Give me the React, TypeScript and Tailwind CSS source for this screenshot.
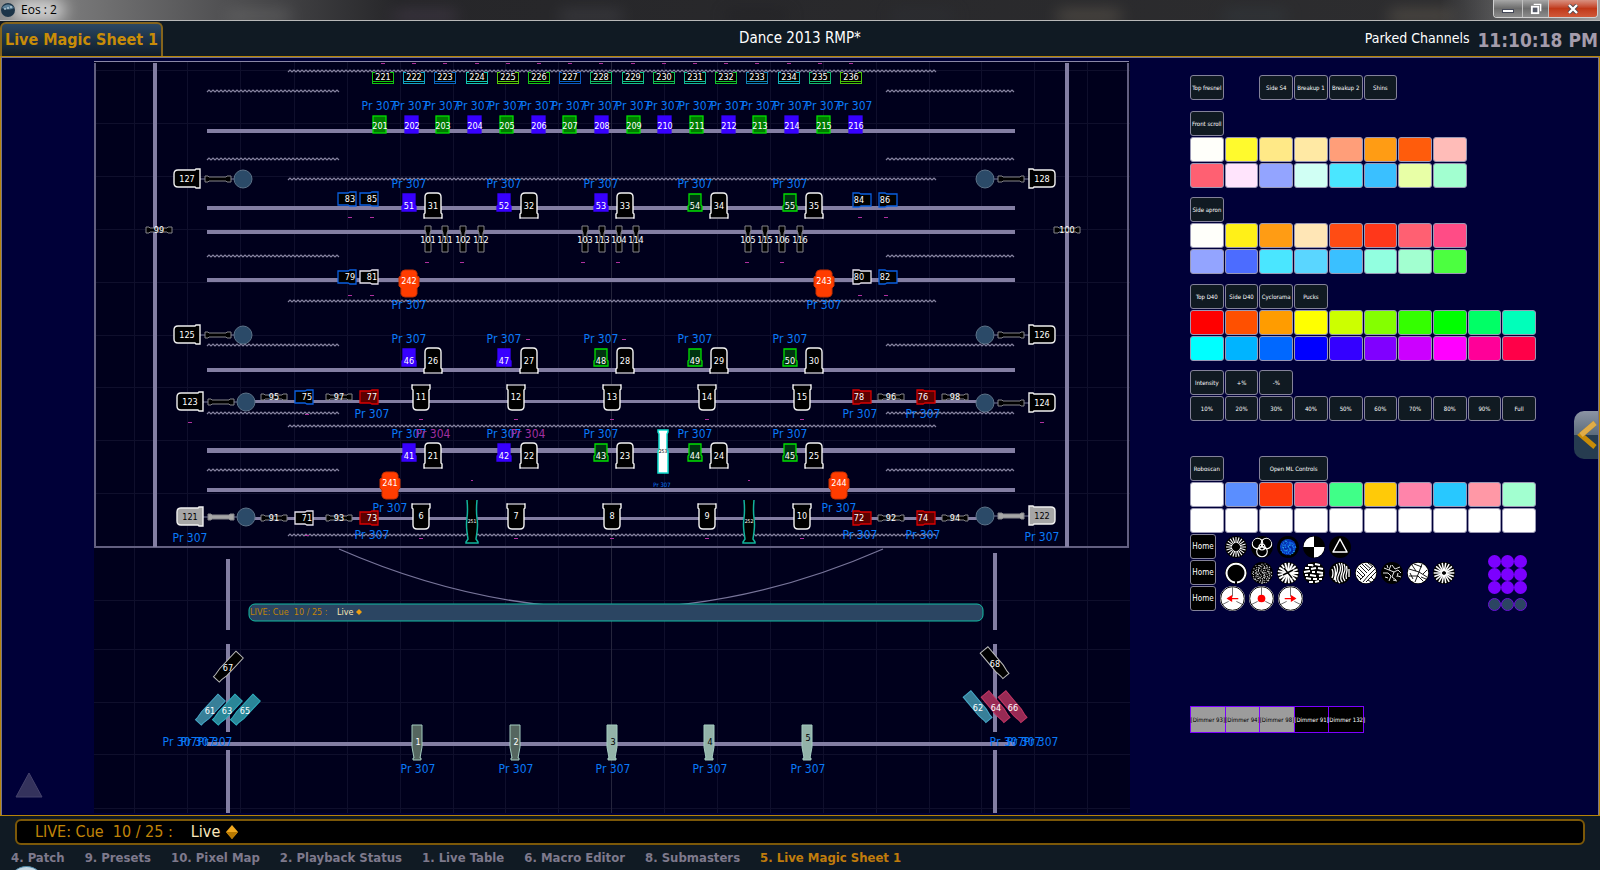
import type { ReactNode } from 'react'

const SANS = "font-['DejaVu_Sans_Condensed','DejaVu_Sans',sans-serif]"
const BLUE = '#0a7af8'
const PIPE = '#837ea3'

/* ---------- plot data ---------- */

const GRID_X = [134, 187, 240, 294, 347, 400, 453, 505, 558, 664, 717, 770, 823, 876, 929, 981, 1034, 1087]
const GRID_Y = [70, 123, 176, 229, 282, 335, 387, 440, 493, 600, 649, 702, 754, 808]

const CYC_COLORS = [
  '#12c412', '#12a4c4', '#0a68c4', '#12c4b4', '#54c80a', '#16c416', '#0a5cc4', '#12b86a',
  '#12c08c', '#12c056', '#12b89a', '#12c030', '#1080b4', '#12b0b8', '#12b870', '#48c00a',
]

const PURPLE = { fill: '#3800ff', stroke: '#3800ff' }
const GREEN = { fill: '#007a00', stroke: '#00e000' }
const DARK_GREEN = { fill: '#003410', stroke: '#00e000' }
const RED = { fill: '#5c0000', stroke: '#d80000' }
const BLUE_BOX = { fill: '#000', stroke: '#0a5fe0' }
const WHITE_BOX = { fill: '#000', stroke: '#e4e0ec' }

const COLS = [409, 504, 601, 695, 790]
const PAR_COLS = [433, 529, 625, 719, 814]
const DOWN_COLS = [421, 516, 612, 707, 802]

const ROWS = [
  { y: 193, specials: [51, 52, 53, 54, 55], pars: [31, 32, 33, 34, 35], purple: 3 },
  { y: 348, specials: [46, 47, 48, 49, 50], pars: [26, 27, 28, 29, 30], purple: 2 },
  { y: 443, specials: [41, 42, 43, 44, 45], pars: [21, 22, 23, 24, 25], purple: 2 },
]

const SHINS = [
  [428, 101], [445, 111], [463, 102], [481, 112],
  [585, 103], [602, 113], [619, 104], [636, 114],
  [748, 105], [765, 115], [782, 106], [800, 116],
]

/* ---------- plot pieces ---------- */

type TextProps = { x: number; y: number; children: ReactNode; size?: number; fill?: string }

const Label = ({ x, y, children, size = 9, fill = '#fff' }: TextProps) => (
  <text x={x} y={y} dy="0.3em" textAnchor="middle" fontSize={size} fill={fill}>{children}</text>
)

const Preset = ({ x, y, fill = BLUE, n = 307 }: { x: number; y: number; fill?: string; n?: number }) => (
  <Label x={x} y={y} size={12} fill={fill}>Pr {n}</Label>
)

const Dash = ({ x, y }: { x: number; y: number }) => (
  <rect x={x - 2} y={y} width={4} height={1} fill="#b030a0" />
)

const Curtain = ({ x1, x2, y }: { x1: number; x2: number; y: number }) => {
  let d = `M${x1} ${y + 1}`
  for (let x = x1; x + 4 <= x2; x += 4) d += 'l2 -2l2 2'
  return <path d={d} fill="none" stroke="#85829f" strokeWidth={1.2} />
}

const Pipe = ({ x1 = 207, x2 = 1015, y, w = 4 }: { x1?: number; x2?: number; y: number; w?: number }) => (
  <rect x={x1} y={y - 2} width={x2 - x1} height={w} fill={PIPE} />
)

const Special = ({ x, y, n, c }: { x: number; y: number; n: number; c: { fill: string; stroke: string } }) => (
  <g>
    <path d={`M${x - 6} ${y + 1}h12v11l1 1v5h-14v-5l1 -1z`} fill={c.fill} stroke={c.stroke} strokeWidth={1.3} />
    <Label x={x} y={y + 13}>{n}</Label>
  </g>
)

const ParUp = ({ x, y, n }: { x: number; y: number; n: number }) => (
  <g>
    <path d={`M${x - 8} ${y + 4}q0 -4 4 -4h8q4 0 4 4v16l1 1v4h-18v-4l1 -1z`} fill="#000" stroke="#f4f4f4" strokeWidth={1.4} />
    <path d={`M${x - 8} ${y + 25}h16`} stroke="#77757f" strokeWidth={1.5} />
    <Label x={x} y={y + 13}>{n}</Label>
  </g>
)

const ParDown = ({ x, y, n }: { x: number; y: number; n: number }) => (
  <g>
    <path d={`M${x - 9} ${y}h18v4l-1 1v16q0 4 -4 4h-8q-4 0 -4 -4v-16l-1 -1z`} fill="#000" stroke="#f4f4f4" strokeWidth={1.4} />
    <path d={`M${x - 8} ${y}h16`} stroke="#77757f" strokeWidth={1.5} />
    <Label x={x} y={y + 12}>{n}</Label>
  </g>
)

// Small side box, flared towards the stage side it points to
const Box = ({ x, y, n, c, flip = false }: { x: number; y: number; n: number; c: { fill: string; stroke: string }; flip?: boolean }) => (
  <g>
    <path
      d={flip ? `M${x} ${y}h6l2 1h10v12h-10l-2 1h-6z` : `M${x} ${y + 1}h10l2 -1h6v14h-6l-2 -1h-10z`}
      fill={c.fill}
      stroke={c.stroke}
      strokeWidth={1.3}
    />
    <Label x={flip ? x + 6 : x + 12} y={y + 7}>{n}</Label>
  </g>
)

const Barrel = ({ x, y, fill = '#000', n, flip }: { x: number; y: number; fill?: string; n?: number; flip?: boolean }) => (
  <g>
    <g transform={flip ? `translate(${x + 26} ${y}) scale(-1 1)` : `translate(${x} ${y})`}>
      <path d="M0 -3h3l1 1h17l1 -1h4v6h-4l-1 -1h-17l-1 1h-3z" fill={fill} stroke="#85858a" />
    </g>
    {n && <Label x={x + 13} y={y}>{n}</Label>}
  </g>
)

const SideUnit = ({ x, y, n, flip = false, grey = false }: { x: number; y: number; n: number; flip?: boolean; grey?: boolean }) => {
  const fill = grey ? '#a6a6a6' : '#000'
  const s = flip ? -1 : 1
  const ball = flip ? x - 70 : x + 69
  return (
    <g>
      <path d={`M${x} ${y}H${ball}`} stroke="#77799a" />
      <g transform={`translate(${x} ${y}) scale(${s} 1)`}>
        <path d="M0 -5q0 -4 4 -4h17l1 -1h4v19h-4l-1 -1h-17q-4 0 -4 -4z" fill={fill} stroke="#f0f0f0" strokeWidth={1.4} />
      </g>
      <Barrel x={flip ? x - 57 : x + 31} y={y} fill={fill} flip={flip} />
      <circle cx={ball} cy={y} r={9} fill="#2b4a68" stroke="#5c7288" />
      <Label x={x + 13 * s} y={y} fill={grey ? '#000' : '#fff'}>{n}</Label>
    </g>
  )
}

const Mover = ({ x, y, n }: { x: number; y: number; n: number }) => (
  <g>
    <path
      d={`M${x - 8} ${y + 3}q1 -3 4 -3h8q3 0 4 3v3l2 1v9l-2 2v6q-1 3 -4 3h-8q-3 0 -4 -3v-6l-2 -2v-9l2 -1z`}
      fill="#ff3c00"
      stroke="#c83000"
    />
    <Label x={x} y={y + 11}>{n}</Label>
  </g>
)

const Shin = ({ x, n }: { x: number; n: number }) => (
  <g>
    <path
      d={`M${x - 3} 226h6v4l-1 3v6l1 3v10h-6v-10l1 -3v-6l-1 -3z`}
      fill="#000"
      stroke="#85858a"
    />
    <Label x={x} y={240}>{n}</Label>
  </g>
)

const Spot = ({ x, y, n, fill, stroke, angle }: { x: number; y: number; n: number; fill: string; stroke: string; angle: number }) => (
  <g>
    <path
      transform={`translate(${x} ${y}) rotate(${angle})`}
      d="M-5 -17h10v24l-1 7v3h-8v-3l-1 -7z"
      fill={fill}
      stroke={stroke}
    />
    <Label x={x} y={y + 1}>{n}</Label>
  </g>
)

const Front = ({ x, n, lit, labelY = 742 }: { x: number; n: number; lit: boolean; labelY?: number }) => (
  <g>
    <path d={`M${x - 5} 725h10v22l-2 11h1v2h-8v-2h1l-2 -11z`} fill={lit ? '#93b3a9' : '#55665f'} stroke="#a4ccc0" />
    <Label x={x + 1} y={labelY} fill={lit ? '#000' : '#fff'}>{n}</Label>
    <Preset x={x + 1} y={769} />
  </g>
)

const Scroller = ({ x, y, n, white = false }: { x: number; y: number; n: number; white?: boolean }) => (
  <g>
    <path
      d={white
        ? `M${x - 5} ${y}h10v2l-1 2v15l1 2v22h-10v-22l1 -2v-15l-1 -2z`
        : `M${x - 5} ${y}q1 10 0 18q-1 6 0 14l1 7l-2 3v1h12v-1l-2 -3l1 -7q1 -8 0 -14q-1 -8 0 -18`}
      fill={white ? '#fff' : '#000'}
      stroke={white ? '#10e0d0' : '#12b49c'}
      strokeWidth={1.5}
    />
    <Label x={x} y={y + 21} size={5} fill={white ? '#000' : '#fff'}>{n}</Label>
  </g>
)

const Plot = () => (
  <svg viewBox="94 58 1036 755" preserveAspectRatio="xMinYMin meet" className={`block w-full ${SANS}`} aria-label="Lighting plot">
    <rect x={94} y={58} width={1036} height={755} fill="#00001c" />
    <g shapeRendering="crispEdges">
      {GRID_X.map((x) => <rect key={x} x={x} y={62} width={1} height={751} fill="#0f0f2c" />)}
      {GRID_Y.map((y) => <rect key={y} x={94} y={y} width={1036} height={1} fill="#0f0f2c" />)}
      <rect x={611} y={62} width={1} height={751} fill="#25253c" />
      <rect x={94} y={58} width={1036} height={3} fill="#000038" />
      <path d="M94 61.5H1129" stroke="#8a87a6" />
      <path d="M95 63V547H1128V63" fill="none" stroke="#625f80" strokeWidth={2} />

      {[131, 208, 232, 280, 370, 490, 744].map((y) => <Pipe key={y} y={y} />)}
      <Pipe y={450} w={5} />
      <Pipe y={402} x1={250} x2={980} w={3} />
      <Pipe y={519} x1={250} x2={980} w={3} />

      <rect x={153} y={63} width={4} height={484} fill={PIPE} />
      <rect x={1065} y={63} width={4} height={484} fill={PIPE} />
      {[226, 993].map((x) => (
        <g key={x} fill={PIPE}>
          <rect x={x} y={x === 226 ? 559 : 553} width={4} height={x === 226 ? 71 : 77} />
          <rect x={x} y={644} width={4} height={88} />
          <rect x={x} y={750} width={4} height={63} />
        </g>
      ))}
    </g>

    {[91, 159, 256, 345, 413, 470].map((y) => (
      <g key={y}>
        <Curtain x1={207} x2={339} y={y} />
        <Curtain x1={886} x2={1015} y={y} />
      </g>
    ))}
    {[71, 179, 301, 426, 535].map((y) => <Curtain key={y} x1={288} x2={936} y={y} />)}
    <path d="M339 549Q611 668 883 549" fill="none" stroke="#77749a" strokeWidth={1.3} />

    {/* Cyc units */}
    {CYC_COLORS.map((c, i) => {
      const x = Math.round(383 + 31.2 * i)
      return (
        <g key={c}>
          <Dash x={x} y={63} />
          <rect x={x - 10} y={73} width={20} height={10} fill="#000" />
          <path shapeRendering="crispEdges" d={`M${x - 8} 72h-3v11h21v-11h-3M${x - 10} 81h20`} fill="none" stroke={c} />
          <Label x={x} y={77}>{221 + i}</Label>
        </g>
      )
    })}

    {/* Backlight row */}
    {CYC_COLORS.map((c, i) => {
      const x = Math.round(380 + 31.7 * i)
      return (
        <g key={c}>
          <rect x={x - 7} y={116} width={13} height={17} strokeWidth={1.3} {...(i % 2 ? PURPLE : GREEN)} />
          <Label x={x} y={126}>{201 + i}</Label>
          <Preset x={x - 1} y={106} />
        </g>
      )
    })}

    {ROWS.map((row) => (
      <g key={row.y}>
        {COLS.map((x, i) => (
          <g key={x}>
            <Preset x={x} y={row.y - 9} />
            <Special x={x} y={row.y} n={row.specials[i]} c={i < row.purple ? PURPLE : DARK_GREEN} />
            <ParUp x={PAR_COLS[i]} y={row.y} n={row.pars[i]} />
          </g>
        ))}
      </g>
    ))}
    <Preset x={433} y={434} fill="#a030a0" n={304} />
    <Preset x={528} y={434} fill="#a030a0" n={304} />
    <Dash x={528} y={339} />
    <Dash x={624} y={339} />

    {DOWN_COLS.map((x, i) => (
      <g key={x}>
        <ParDown x={x} y={385} n={11 + i} />
        <ParDown x={x} y={504} n={6 + i} />
        <Dash x={x} y={419} />
        <Dash x={x} y={538} />
      </g>
    ))}

    {SHINS.map(([x, n]) => <Shin key={n} x={x} n={n} />)}
    {[427, 462, 583, 618, 747, 782].map((x) => <Dash key={x} x={x} y={262} />)}

    <Box x={338} y={192} n={83} c={BLUE_BOX} />
    <Box x={360} y={192} n={85} c={BLUE_BOX} />
    <Box x={338} y={270} n={79} c={BLUE_BOX} />
    <Box x={360} y={270} n={81} c={WHITE_BOX} />
    <Box x={853} y={193} n={84} c={BLUE_BOX} flip />
    <Box x={879} y={193} n={86} c={BLUE_BOX} flip />
    <Box x={853} y={270} n={80} c={WHITE_BOX} flip />
    <Box x={879} y={270} n={82} c={BLUE_BOX} flip />
    {[350, 372, 860, 886].map((x) => (
      <g key={x}>
        <Dash x={x} y={217} />
        <Dash x={x} y={295} />
      </g>
    ))}

    <Mover x={409} y={270} n={242} />
    <Preset x={409} y={305} />
    <Mover x={824} y={270} n={243} />
    <Preset x={824} y={305} />
    <Mover x={390} y={472} n={241} />
    <Preset x={390} y={508} />
    <Mover x={839} y={472} n={244} />
    <Preset x={839} y={508} />

    <SideUnit x={174} y={179} n={127} />
    <SideUnit x={174} y={335} n={125} />
    <SideUnit x={177} y={402} n={123} />
    <SideUnit x={177} y={517} n={121} grey />
    <Dash x={190} y={422} />
    <Preset x={190} y={538} />
    <SideUnit x={1055} y={179} n={128} flip />
    <SideUnit x={1055} y={335} n={126} flip />
    <SideUnit x={1055} y={403} n={124} flip />
    <SideUnit x={1055} y={516} n={122} flip grey />
    <Dash x={1042} y={422} />
    <Preset x={1042} y={537} />

    <Barrel x={146} y={230} n={99} />
    <Barrel x={1054} y={230} n={100} flip />

    {[{ y: 397, a: [95, 75, 97, 77, 78, 96, 76, 98] }, { y: 518, a: [91, 71, 93, 73, 72, 92, 74, 94] }].map(({ y, a }) => (
      <g key={y}>
        <Barrel x={261} y={y} n={a[0]} />
        <Box x={295} y={y - 7} n={a[1]} c={a[1] === 75 ? BLUE_BOX : WHITE_BOX} />
        <Barrel x={326} y={y} n={a[2]} />
        <Box x={360} y={y - 7} n={a[3]} c={RED} />
        <Box x={853} y={y - 7} n={a[4]} c={RED} flip />
        <Barrel x={878} y={y} n={a[5]} flip />
        <Box x={917} y={y - 7} n={a[6]} c={RED} flip />
        <Barrel x={942} y={y} n={a[7]} flip />
        <Preset x={372} y={y + 17} />
        <Preset x={860} y={y + 17} />
        <Preset x={923} y={y + 17} />
        <Dash x={307} y={y + 17} />
      </g>
    ))}

    <Scroller x={472} y={500} n={251} />
    <Scroller x={749} y={500} n={252} />
    <Scroller x={663} y={430} n={253} white />
    <Label x={662} y={485} size={6} fill={BLUE}>Pr 307</Label>
    <rect x={471} y={480} width={2} height={1} fill="#b030a0" />
    <rect x={748} y={480} width={2} height={1} fill="#b030a0" />

    {/* Cue status bar */}
    <rect x={249} y={604} width={734} height={17} rx={6} fill="#2b4562" stroke="#12bca4" />
    <text x={250} y={615} fontSize={9} fill="#c08408" xmlSpace="preserve">LIVE: Cue  10 / 25 :</text>
    <text x={337} y={615} fontSize={9} fill="#f8e6b4">Live</text>
    <path d="M359 609l3 3l-3 3l-3 -3z" fill="#f0a010" />

    {/* Box booms */}
    <Spot x={228} y={667} n={67} fill="#000" stroke="#b8b8b8" angle={43} />
    <Spot x={210} y={710} n={61} fill="#387f98" stroke="#46a8c8" angle={43} />
    <Spot x={227} y={710} n={63} fill="#2a8698" stroke="#30b0c0" angle={43} />
    <Spot x={245} y={710} n={65} fill="#2a8698" stroke="#30b0c0" angle={43} />
    <Spot x={995} y={663} n={68} fill="#000" stroke="#b8b8b8" angle={-40} />
    <Spot x={978} y={707} n={62} fill="#387f98" stroke="#46a8c8" angle={-40} />
    <Spot x={996} y={707} n={64} fill="#982a54" stroke="#c03664" angle={-40} />
    <Spot x={1013} y={707} n={66} fill="#982a54" stroke="#c03664" angle={-40} />
    {[180, 198, 215, 1007, 1024, 1041].map((x) => <Preset key={x} x={x} y={742} />)}

    <Front x={417} n={1} lit={false} />
    <Front x={515} n={2} lit={false} />
    <Front x={612} n={3} lit />
    <Front x={709} n={4} lit />
    <Front x={807} n={5} lit labelY={738} />
  </svg>
)

/* ---------- control panel ---------- */

const FRONT_SCROLL = [
  '#fffffa', '#fffa2d', '#ffe987', '#ffe9a4', '#ff9e79', '#ff9c14', '#ff5c0c', '#ffbcb8',
  '#ff6072', '#ffe4fc', '#93a4ff', '#d0fff4', '#4ae6ff', '#3ac0ff', '#e8ffa6', '#a2ffd0',
]
const SIDE_APRON = [
  '#fffffa', '#fff018', '#ff9c14', '#ffe6b6', '#ff4c14', '#ff371a', '#ff6072', '#ff4c86',
  '#93a4ff', '#4c6cff', '#4ae6ff', '#5ad6ff', '#3ac0ff', '#92ffe0', '#a2ffd0', '#4cff40',
]
const LED = [
  '#ff0000', '#ff5000', '#ff9c00', '#ffff00', '#ccff00', '#84ff00', '#34ff00', '#00ff00', '#00ff66', '#00ffba',
  '#00ffff', '#00b4ff', '#0068ff', '#0000ff', '#3400ff', '#8000ff', '#cc00ff', '#ff00ff', '#ff0098', '#ff0048',
]
const ROBO = ['#ffffff', '#5a8eff', '#ff380a', '#ff4c70', '#40ff88', '#ffca08', '#ff84aa', '#28c8ff', '#ff98a6', '#a2ffd0']
const LEVELS = ['10%', '20%', '30%', '40%', '50%', '60%', '70%', '80%', '90%', 'Full']

const Tile = ({ label, wide = false }: { label: string; wide?: boolean }) => (
  <button className={`h-[25px] overflow-hidden rounded-[3px] border border-[#84829a] bg-[#101a22] text-[6px] leading-none whitespace-nowrap text-white ${wide ? 'col-span-2' : ''}`}>
    {label}
  </button>
)

const Swatch = ({ color, first = false }: { color: string; first?: boolean }) => (
  <button
    aria-label={color}
    className={`h-[25px] rounded-[3px] border border-[#9a98b4] ${first ? 'col-start-1' : ''}`}
    style={{ backgroundColor: color }}
  />
)

const TileGrid = ({ children, className = '' }: { children: ReactNode; className?: string }) => (
  <div className={`grid grid-cols-10 gap-px ${className}`}>{children}</div>
)

const SwatchRows = ({ colors, perRow }: { colors: string[]; perRow: number }) => (
  <>
    {colors.map((c, i) => <Swatch key={i} color={c} first={i % perRow === 0} />)}
  </>
)

const Rays = ({ count, inner, outer, width }: { count: number; inner: number; outer: number; width: number }) => (
  <>
    {Array.from({ length: count }, (_, i) => {
      const a = (i * 2 * Math.PI) / count
      return (
        <line
          key={i}
          x1={Math.cos(a) * inner} y1={Math.sin(a) * inner}
          x2={Math.cos(a) * outer} y2={Math.sin(a) * outer}
          stroke="#fff" strokeWidth={width}
        />
      )
    })}
  </>
)

// Scattered specks inside the disc, on a golden-angle spiral
const Specks = ({ count, size, radius = 10, colors }: { count: number; size: number; radius?: number; colors: string[] }) => (
  <>
    {Array.from({ length: count }, (_, i) => {
      const r = Math.sqrt((i + 0.5) / count) * radius
      const a = i * 2.4
      return (
        <rect
          key={i}
          x={Math.cos(a) * r} y={Math.sin(a) * r}
          width={size * (1 + (i % 3) * 0.5)} height={size}
          fill={colors[i % colors.length]}
          transform={`rotate(${(i * 67) % 90} ${Math.cos(a) * r} ${Math.sin(a) * r})`}
        />
      )
    })}
  </>
)

const GOBOS_1: ReactNode[] = [
  <Rays count={20} inner={4} outer={10} width={1.1} />,
  <g fill="none" stroke="#fff" strokeWidth={1.1}>
    <circle cx={-4.5} cy={-3.5} r={5.3} />
    <circle cx={4.5} cy={-3.5} r={5.3} />
    <circle cx={0} cy={4.5} r={5.3} />
    <circle r={3} />
  </g>,
  <>
    <circle r={8} fill="#0636b4" />
    <Specks count={70} size={1} radius={7.5} colors={['#1a8cff', '#0420a0', '#28a8e8', '#0a50e0']} />
  </>,
  <path d="M0 0V-10.5A10.5 10.5 0 0 0 -10.5 0zM0 0V10.5A10.5 10.5 0 0 0 10.5 0z" fill="#fff" />,
  <path d="M0 -8L7 5H-7z" fill="none" stroke="#fff" strokeWidth={1.5} strokeLinejoin="round" />,
]

const GOBOS_2: ReactNode[] = [
  <path d="M1 9.4A9.4 9.4 0 1 0 -1 9.4" fill="none" stroke="#fff" strokeWidth={2} />,
  <Specks count={80} size={0.9} colors={['#e8e8e8']} />,
  <>
    <Rays count={17} inner={1} outer={10.3} width={1.9} />
    <path d="M-4 -5L4 5M-5 2L5 -3" stroke="#000" strokeWidth={1.4} />
  </>,
  <path
    d="M-6 -8h4l1 1M1 -9l5 1M-9 -5h4M-3 -4l5 -1M4 -5l5 1M-10 -1l6 -1M-2 -1h3M3 -1l6 1M-9 2h3M-4 2l6 1M5 3l4 -1M-8 5l5 1M-1 6h4M5 6h3M-5 9l4 0M1 9l4 -1"
    stroke="#fff" strokeWidth={2.1}
  />,
  <path
    d="M-8 -4q2 4 0 9M-6 -7q3 6 0 14M-3.500 -9q2 5 0 10t0 8M-1 -10q3 5 0 11t1 9M1.500 -10q2 6 0 11t1 8M4 -9q2 5 0 9t1 8M6.500 -7q1 4 0 7t0 6M9 -4v8"
    fill="none" stroke="#fff" strokeWidth={1.3}
  />,
  <>
    <circle r={10.3} fill="#fff" />
    <path
      d="M-8 -5L-1 2M-6 -7L1 0M-4 -9L3 -2M-9 -2L-3 4M9 -4L2 3M10 -1L0 9M7 -7L3 -3M-1 2L-6 7M2 3L-3 9M-1 -9L5 -4M2 -10L7 -6M5 4L8 7M2 7L5 9M-9 2L-5 6"
      stroke="#000" strokeWidth={0.9}
    />
  </>,
  <path
    d="M-8 -5l5 2l2 -5M0 -8l3 4l5 -2M-9 0h5l3 3l-2 5M-3 -3l5 2l4 -2l3 3M2 -1l-2 5l4 3M6 3l3 1M-7 4l3 1M5 8l-4 -1M-5 -8l1 3M6 0l-1 4"
    fill="none" stroke="#fff" strokeWidth={0.9}
  />,
  <>
    <circle r={10.3} fill="#fff" />
    <path
      d="M-9 -4L1 -1L4 -9M1 -1L-3 9M1 -1L9 4M-6 -8L-2 -2M-9 3L0 3L5 8M5 1L9 -3M-5 6L-8 0M4 -6L-4 -9M3 4L8 6"
      fill="none" stroke="#000" strokeWidth={0.9}
    />
  </>,
  <Rays count={18} inner={2} outer={10.3} width={1.5} />,
]

const Gobo = ({ children, name }: { children: ReactNode; name: string }) => (
  <button aria-label={name} className="size-[22px] overflow-hidden rounded-full bg-black">
    <svg viewBox="-11 -11 22 22" className="size-full">{children}</svg>
  </button>
)

const Rotator = ({ kind }: { kind: 'left' | 'stop' | 'right' }) => (
  <button aria-label={`Rotate ${kind}`} className="size-[25px] rounded-full bg-white">
    <svg viewBox="-13 -13 26 26" className="size-full">
      <circle r={12.3} fill="#fff" stroke="#000" />
      <path d="M0 -12V-2M-10 6L-4 3M10 6L4 3" stroke="#444" strokeWidth={0.8} />
      {kind === 'stop' && <circle r={4} fill="#f00" />}
      {kind === 'left' && <path d="M6 0H-2M-1 -2.500L-5 0L-1 2.500z" stroke="#f00" strokeWidth={1.3} fill="#f00" />}
      {kind === 'right' && <path d="M-6 0H2M1 -2.500L5 0L1 2.500z" stroke="#f00" strokeWidth={1.3} fill="#f00" />}
    </svg>
  </button>
)

const HomeButton = () => (
  <button className="h-[25px] w-[26px] rounded-[3px] border border-[#84829a] bg-black text-[8px] leading-none text-white">Home</button>
)

const GoboRow = ({ gobos, bank }: { gobos: ReactNode[]; bank: string }) => (
  <div className="flex items-center gap-[9px]">
    <HomeButton />
    <div className="flex gap-1">
      {gobos.map((g, i) => <Gobo key={i} name={`Gobo ${bank}${i + 1}`}>{g}</Gobo>)}
    </div>
  </div>
)

const ControlPanel = () => (
  <aside className="pt-[17px] pl-[60px]">
    <div className="w-[346px]">
      <TileGrid>
        <Tile label="Top fresnel" />
        <span />
        {['Side S4', 'Breakup 1', 'Breakup 2', 'Shins'].map((l) => <Tile key={l} label={l} />)}
      </TileGrid>

      <TileGrid className="mt-[11px]">
        <Tile label="Front scroll" />
        <SwatchRows colors={FRONT_SCROLL} perRow={8} />
      </TileGrid>

      <TileGrid className="mt-[9px]">
        <Tile label="Side apron" />
        <SwatchRows colors={SIDE_APRON} perRow={8} />
      </TileGrid>

      <TileGrid className="mt-[10px]">
        {['Top D40', 'Side D40', 'Cyclorama', 'Pucks'].map((l) => <Tile key={l} label={l} />)}
        <SwatchRows colors={LED} perRow={10} />
      </TileGrid>

      <TileGrid className="mt-[9px]">
        {['Intensity', '+%', '-%'].map((l) => <Tile key={l} label={l} />)}
        <span className="col-span-7" />
        {LEVELS.map((l) => <Tile key={l} label={l} />)}
      </TileGrid>

      <TileGrid className="mt-[35px]">
        <Tile label="Roboscan" />
        <span />
        <Tile label="Open ML Controls" wide />
        <SwatchRows colors={ROBO} perRow={10} />
        <SwatchRows colors={LEVELS.map(() => '#ffffff')} perRow={10} />
      </TileGrid>

      <div className="mt-px flex justify-between pr-[9px]">
        <div className="flex flex-col gap-px">
          <GoboRow gobos={GOBOS_1} bank="A" />
          <GoboRow gobos={GOBOS_2} bank="B" />
          <div className="flex items-center gap-1">
            <HomeButton />
            <Rotator kind="left" />
            <Rotator kind="stop" />
            <Rotator kind="right" />
          </div>
        </div>
        <div className="mt-[21px]">
          <div className="grid grid-cols-3">
            {Array.from({ length: 9 }, (_, i) => <span key={i} className="size-[13px] rounded-full bg-[#7c00ff]" />)}
          </div>
          <div className="mt-1 grid grid-cols-3">
            {Array.from({ length: 3 }, (_, i) => (
              <span key={i} className="size-[13px] rounded-full border border-[#6a10d8] bg-[#2b4562]" />
            ))}
          </div>
        </div>
      </div>
    </div>

    <div className="mt-[95px] flex w-[173px]">
      {[93, 94, 98, 91, 132].map((n, i) => (
        <button
          key={n}
          className={`-mr-px flex h-[27px] min-w-0 flex-1 items-center justify-center border border-[#7c00ff] text-[6px] leading-none whitespace-nowrap ${
            i < 3 ? 'bg-[#9c9c9c] text-black' : 'bg-black text-white'
          }`}
        >
          [Dimmer {n}]
        </button>
      ))}
    </div>
  </aside>
)

/* ---------- window chrome ---------- */

const TitleBar = () => (
  <div className="relative flex h-[21px] items-start justify-between overflow-hidden border-b border-[#b8b8b8] bg-linear-to-r from-[#8c8c8c] via-[#262629] via-25% to-[#2e2e30]">
    {/* Desktop showing through the glass */}
    <div className="absolute inset-0 flex items-end justify-around pr-24 pl-44 opacity-60">
      {['bg-[#7c7c7c]', 'bg-[#5c4c64]', 'bg-[#54545c]', 'bg-[#1c1c20]', 'bg-[#30343c]', 'bg-[#887c68]', 'bg-[#38444c]', 'bg-[#887c68]'].map((c, i) => (
        <span key={i} className={`h-2 w-16 rounded-full blur-sm ${c}`} />
      ))}
    </div>
    <span className="absolute inset-y-0 right-0 w-40 bg-linear-to-l from-[#a0a0a0] to-transparent" />
    <div className="relative flex h-5 items-center gap-1.5 pl-px font-['Open_Sans',sans-serif] text-xs text-black">
      <span className="absolute inset-y-0 -right-2 left-3 rounded-full bg-white/70 blur-sm" />
      <svg viewBox="0 0 14 14" className="relative size-3.5">
        <circle cx={7} cy={7} r={7} fill="#1c3448" />
        <path d="M1 5a7 7 0 0 1 12 0q-6 3 -12 0z" fill="#5c8098" />
        <path d="M3 6h2M6 5h2M9 4h2" stroke="#dce8f0" strokeWidth={1.2} />
      </svg>
      <span className="relative">Eos : 2</span>
    </div>
    <div className="relative mr-0.5 flex h-[18px] w-[105px] overflow-hidden rounded-b-[4px] border border-t-0 border-[#d0d0d0]">
      <button aria-label="Minimize" className="flex w-[29px] items-center justify-center border-r border-[#c0c0c0] bg-linear-to-b from-[#a8a8a8] via-[#6c6c6c] to-[#8c8c8c]">
        <span className="mt-1 h-1 w-3 border border-[#444858] bg-white" />
      </button>
      <button aria-label="Restore" className="flex w-[26px] items-center justify-center border-r border-[#c0c0c0] bg-linear-to-b from-[#a8a8a8] via-[#6c6c6c] to-[#8c8c8c]">
        <svg viewBox="0 0 13 13" className="size-3">
          <path d="M4 1.500h7.500v7.500" fill="none" stroke="#fff" strokeWidth={1.6} />
          <rect x={2} y={4} width={7} height={7} fill="#555a68" stroke="#fff" strokeWidth={2} />
        </svg>
      </button>
      <button aria-label="Close" className="flex flex-1 items-center justify-center bg-linear-to-b from-[#d89080] via-[#c03818] to-[#d05838]">
        <svg viewBox="0 0 12 10" className="h-2.5 w-3">
          <path d="M2 1l8 8M10 1L2 9" stroke="#504850" strokeWidth={4} />
          <path d="M2 1l8 8M10 1L2 9" stroke="#fff" strokeWidth={2.4} />
        </svg>
      </button>
    </div>
  </div>
)

const Header = () => (
  <header className="grid h-[35px] grid-cols-3 items-center">
    <div className="flex h-[34px] w-fit items-center self-end rounded-t-md border-2 border-b-0 border-[#85641c] bg-linear-to-b from-[#2b4864] to-[#101c28] px-[3px] text-base font-bold text-[#c88c08]">
      Live Magic Sheet 1
    </div>
    <h1 className="pb-0.5 text-center text-[15px] leading-5 text-white">Dance 2013 RMP*</h1>
    <div className="flex items-center justify-end gap-2 pr-0.5 pb-0.5 whitespace-nowrap">
      <span className="text-sm text-white">Parked Channels</span>
      <time className="mt-1 text-[19px] leading-6 font-bold text-[#a49cac]">11:10:18 PM</time>
    </div>
  </header>
)

const TABS = [
  '4. Patch', '9. Presets', '10. Pixel Map', '2. Playback Status',
  '1. Live Table', '6. Macro Editor', '8. Submasters', '5. Live Magic Sheet 1',
]

const Footer = () => (
  <footer className="relative h-[54px] overflow-hidden pt-[3px]">
    <div className="mx-[15px] flex h-[26px] items-center rounded-md border-2 border-[#7c5808] bg-black pl-[18px] text-base whitespace-pre">
      <span className="text-[#c08408]">LIVE: Cue  10 / 25 :</span>
      <span className="ml-[18px] text-[#fbe8bc]">Live</span>
      <svg viewBox="0 0 12 14" className="ml-1.5 h-3.5 w-3">
        <path d="M6 0L12 7L6 14L0 7z" fill="#f0a820" />
        <path d="M6 14L12 7H0z" fill="#b87800" />
      </svg>
    </div>
    <nav className="flex h-[25px] items-center gap-5 pl-[11px] text-[13px] font-bold text-[#7e798c]">
      {TABS.map((tab, i) => (
        <button key={tab} className={i === TABS.length - 1 ? 'text-[#c07c0c]' : ''}>{tab}</button>
      ))}
    </nav>
    <span className="absolute top-[50px] left-2 size-[37px] rounded-full border border-[#4c88a8] bg-[#c4d6e2]" />
  </footer>
)

const App = () => (
  <div className={`flex h-screen flex-col overflow-hidden bg-[#101a23] ${SANS}`}>
    <TitleBar />
    <Header />
    <main className="relative min-h-0 flex-1 border-x border-y border-[#b88408]">
      <div className="grid h-full grid-cols-[92fr_1036fr_468fr] overflow-hidden border-x border-t border-[#77758c] bg-[#000038]">
        <div className="flex items-end pb-[17px] pl-[13px]">
          <svg viewBox="0 0 28 26" className="h-[26px] w-7">
            <path d="M14 1L27 25H1z" fill="#34325c" stroke="#45426c" />
          </svg>
        </div>
        <Plot />
        <ControlPanel />
      </div>
      <button aria-label="Open drawer" className="absolute top-[354px] right-px h-12 w-6 rounded-l-[10px] bg-linear-to-b from-[#8c94a4] via-[#5c6c7c] via-50% to-[#263c50] to-50%">
        <svg viewBox="0 0 24 48" className="size-full">
          <path d="M21 12L7 24L21 36" fill="none" stroke="#c88c08" strokeWidth={5} />
          <path d="M21 12L7 24" fill="none" stroke="#e0ac48" strokeWidth={5} />
        </svg>
      </button>
    </main>
    <Footer />
  </div>
)

export default App
